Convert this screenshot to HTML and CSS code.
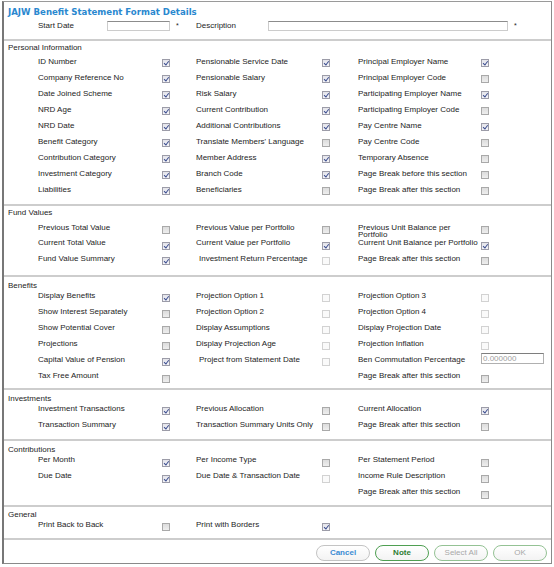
FILE: index.html
```html
<!DOCTYPE html>
<html>
<head>
<meta charset="utf-8">
<link rel="stylesheet" href="styles.css">
</head>
<body>
<div class="frame">
  <div class="title">JAJW Benefit Statement Format Details</div>
  <div class="startrow">
    <div class="lbl">Start Date</div>
    <div class="inp inp-date"></div>
    <div class="star">*</div>
    <div class="lbl">Description</div>
    <div class="inp inp-desc"></div>
    <div class="star">*</div>
  </div>

  <div class="sec sec-personal">
    <div class="head">Personal Information</div>
    <div class="grid">
      <div class="lbl">ID Number</div><div><span class="cb on"></span></div>
      <div class="lbl">Pensionable Service Date</div><div><span class="cb on"></span></div>
      <div class="lbl">Principal Employer Name</div><div><span class="cb on"></span></div>

      <div class="lbl">Company Reference No</div><div><span class="cb on"></span></div>
      <div class="lbl">Pensionable Salary</div><div><span class="cb on"></span></div>
      <div class="lbl">Principal Employer Code</div><div><span class="cb"></span></div>

      <div class="lbl">Date Joined Scheme</div><div><span class="cb on"></span></div>
      <div class="lbl">Risk Salary</div><div><span class="cb on"></span></div>
      <div class="lbl">Participating Employer Name</div><div><span class="cb on"></span></div>

      <div class="lbl">NRD Age</div><div><span class="cb on"></span></div>
      <div class="lbl">Current Contribution</div><div><span class="cb on"></span></div>
      <div class="lbl">Participating Employer Code</div><div><span class="cb"></span></div>

      <div class="lbl">NRD Date</div><div><span class="cb on"></span></div>
      <div class="lbl">Additional Contributions</div><div><span class="cb on"></span></div>
      <div class="lbl">Pay Centre Name</div><div><span class="cb on"></span></div>

      <div class="lbl">Benefit Category</div><div><span class="cb on"></span></div>
      <div class="lbl">Translate Members' Language</div><div><span class="cb"></span></div>
      <div class="lbl">Pay Centre Code</div><div><span class="cb"></span></div>

      <div class="lbl">Contribution Category</div><div><span class="cb on"></span></div>
      <div class="lbl">Member Address</div><div><span class="cb on"></span></div>
      <div class="lbl">Temporary Absence</div><div><span class="cb"></span></div>

      <div class="lbl">Investment Category</div><div><span class="cb on"></span></div>
      <div class="lbl">Branch Code</div><div><span class="cb on"></span></div>
      <div class="lbl">Page Break before this section</div><div><span class="cb"></span></div>

      <div class="lbl">Liabilities</div><div><span class="cb on"></span></div>
      <div class="lbl">Beneficiaries</div><div><span class="cb"></span></div>
      <div class="lbl">Page Break after this section</div><div><span class="cb"></span></div>
    </div>
  </div>

  <div class="sec sec-fund">
    <div class="head">Fund Values</div>
    <div class="grid">
      <div class="lbl">Previous Total Value</div><div><span class="cb"></span></div>
      <div class="lbl">Previous Value per Portfolio</div><div><span class="cb"></span></div>
      <div class="lbl wrap">Previous Unit Balance per Portfolio</div><div><span class="cb"></span></div>

      <div class="lbl">Current Total Value</div><div><span class="cb on"></span></div>
      <div class="lbl">Current Value per Portfolio</div><div><span class="cb on"></span></div>
      <div class="lbl">Current Unit Balance per Portfolio</div><div><span class="cb on"></span></div>

      <div class="lbl">Fund Value Summary</div><div><span class="cb on"></span></div>
      <div class="lbl ind">Investment Return Percentage</div><div><span class="cb dis"></span></div>
      <div class="lbl">Page Break after this section</div><div><span class="cb"></span></div>
    </div>
  </div>

  <div class="sec sec-benefits">
    <div class="head">Benefits</div>
    <div class="grid">
      <div class="lbl">Display Benefits</div><div><span class="cb on"></span></div>
      <div class="lbl">Projection Option 1</div><div><span class="cb dis"></span></div>
      <div class="lbl">Projection Option 3</div><div><span class="cb dis"></span></div>

      <div class="lbl">Show Interest Separately</div><div><span class="cb"></span></div>
      <div class="lbl">Projection Option 2</div><div><span class="cb dis"></span></div>
      <div class="lbl">Projection Option 4</div><div><span class="cb dis"></span></div>

      <div class="lbl">Show Potential Cover</div><div><span class="cb"></span></div>
      <div class="lbl">Display Assumptions</div><div><span class="cb dis"></span></div>
      <div class="lbl">Display Projection Date</div><div><span class="cb dis"></span></div>

      <div class="lbl">Projections</div><div><span class="cb"></span></div>
      <div class="lbl">Display Projection Age</div><div><span class="cb dis"></span></div>
      <div class="lbl">Projection Inflation</div><div><span class="cb dis"></span></div>

      <div class="lbl">Capital Value of Pension</div><div><span class="cb on"></span></div>
      <div class="lbl ind">Project from Statement Date</div><div><span class="cb dis"></span></div>
      <div class="lbl">Ben Commutation Percentage</div><div><div class="inp inp-pct">0.000000</div></div>

      <div class="lbl">Tax Free Amount</div><div><span class="cb"></span></div>
      <div></div><div></div>
      <div class="lbl">Page Break after this section</div><div><span class="cb"></span></div>
    </div>
  </div>

  <div class="sec sec-invest">
    <div class="head">Investments</div>
    <div class="grid">
      <div class="lbl">Investment Transactions</div><div><span class="cb on"></span></div>
      <div class="lbl">Previous Allocation</div><div><span class="cb"></span></div>
      <div class="lbl">Current Allocation</div><div><span class="cb on"></span></div>

      <div class="lbl">Transaction Summary</div><div><span class="cb on"></span></div>
      <div class="lbl">Transaction Summary Units Only</div><div><span class="cb"></span></div>
      <div class="lbl">Page Break after this section</div><div><span class="cb"></span></div>
    </div>
  </div>

  <div class="sec sec-contrib">
    <div class="head">Contributions</div>
    <div class="grid">
      <div class="lbl">Per Month</div><div><span class="cb on"></span></div>
      <div class="lbl">Per Income Type</div><div><span class="cb"></span></div>
      <div class="lbl">Per Statement Period</div><div><span class="cb"></span></div>

      <div class="lbl">Due Date</div><div><span class="cb on"></span></div>
      <div class="lbl">Due Date &amp; Transaction Date</div><div><span class="cb dis"></span></div>
      <div class="lbl">Income Rule Description</div><div><span class="cb"></span></div>

      <div></div><div></div><div></div><div></div>
      <div class="lbl">Page Break after this section</div><div><span class="cb"></span></div>
    </div>
  </div>

  <div class="sec sec-general">
    <div class="head">General</div>
    <div class="grid">
      <div class="lbl">Print Back to Back</div><div><span class="cb"></span></div>
      <div class="lbl">Print with Borders</div><div><span class="cb on"></span></div>
      <div></div><div></div>
    </div>
  </div>

  <div class="sec footer">
    <div class="btn btn-cancel">Cancel</div>
    <div class="btn btn-note">Note</div>
    <div class="btn btn-off">Select All</div>
    <div class="btn btn-off">OK</div>
  </div>
</div>
</body>
</html>
```

FILE: styles.css
```css
html, body {
  margin: 0;
  padding: 0;
  background: #ffffff;
}

body {
  font-family: "Liberation Sans", Arial, sans-serif;
  font-size: 8px;
  color: #242424;
}

.frame {
  margin: 1px 0 0 2px;
  width: 547px;
  height: 561px;
  border-top: 1px solid #9a9a9a;
  border-right: 1px solid #8a8a8a;
  border-bottom: 1px solid #8a8a8a;
  border-left: 2px solid #777777;
  overflow: hidden;
}

.title {
  font-family: "DejaVu Sans", Verdana, sans-serif;
  font-weight: bold;
  font-size: 8.6px;
  line-height: 13px;
  color: #2a88cf;
  padding: 4px 0 0 4px;
  white-space: nowrap;
}

.startrow {
  display: grid;
  grid-template-columns: 69px 63px 26px 72px 240px 1fr;
  align-items: center;
  height: 10px;
  margin-top: 2px;
  padding: 0 0 8px 34px;
}

.lbl {
  line-height: 10px;
  white-space: nowrap;
}

.star {
  font-size: 7px;
  line-height: 7px;
  align-self: start;
  padding: 1px 0 0 6px;
}

.inp {
  box-sizing: border-box;
  height: 10px;
  background: #ffffff;
  border: 1px solid #cccccc;
  border-top-color: #8c8c8c;
}

.inp-date { width: 63px; }
.inp-desc { width: 240px; }

.inp-pct {
  width: 63px;
  height: 11px;
  margin-top: -1.5px;
  border-color: #b0b0b0;
  border-top-color: #7e7e7e;
  color: #a0a0a0;
  font-size: 8px;
  line-height: 9px;
  padding-left: 1px;
}

.sec {
  border-top: 2px solid #cdcdcd;
}

.head {
  line-height: 10px;
  padding-left: 4px;
  white-space: nowrap;
}

.grid {
  display: grid;
  grid-template-columns: 124px 34px 126px 36px 123px 1fr;
  align-items: start;
  padding-left: 34px;
  grid-auto-rows: 16px;
}

.cb {
  display: block;
  position: relative;
  box-sizing: border-box;
  width: 8px;
  height: 8px;
  margin-top: 3.5px;
  border: 1px solid #a9a9a9;
  background: linear-gradient(#dcdcdc, #eeeeee);
}

.cb.on {
  border-color: #9c9ca8;
  background: linear-gradient(#e4e4ea, #f4f4f8);
}

.cb.on::after {
  content: "";
  position: absolute;
  left: 2.2px;
  top: 0.3px;
  width: 1.6px;
  height: 3.8px;
  border: solid #3a4c8e;
  border-width: 0 1.3px 1.3px 0;
  transform: rotate(38deg);
}

.cb.dis {
  border-color: #d2d2d2;
  background: #fafafa;
}

.ind { padding-left: 3px; }

.wrap {
  white-space: normal;
  line-height: 7.5px;
  padding-top: 1px;
}

/* section spacing */
.sec-personal { padding: 1.5px 0 3px; }
.sec-personal .grid { margin-top: 4.5px; }
.sec-personal .cb { margin-top: 2.2px; }

.sec-fund { padding: 2px 0 6px; }
.sec-fund .grid { margin-top: 4.5px; grid-auto-rows: 15.5px; }

.sec-benefits { padding: 3.5px 0 0.5px; }
.sec-benefits .grid { grid-template-rows: 16px 16px 16px 16px 16.5px 16px; }

.sec-invest { padding: 4px 0 3px; }

.sec-contrib { padding: 4.5px 0 1.5px; }

.sec-general { padding: 3px 0 2.5px; }

.footer {
  display: flex;
  justify-content: flex-end;
  gap: 5px;
  padding: 5px 4px 0 0;
}

.btn {
  box-sizing: border-box;
  width: 54px;
  height: 16px;
  border-radius: 8px;
  border: 1px solid #c4c4c4;
  background: linear-gradient(#ffffff, #f3f3f3);
  text-align: center;
  line-height: 14px;
  font-size: 8px;
}

.btn-cancel {
  color: #3a8bd2;
  font-weight: bold;
}

.btn-note {
  border-color: #4f9f52;
  color: #2e7d32;
  font-weight: bold;
}

.btn-off {
  border-color: #94c294;
  color: #a8a8a8;
}
```
